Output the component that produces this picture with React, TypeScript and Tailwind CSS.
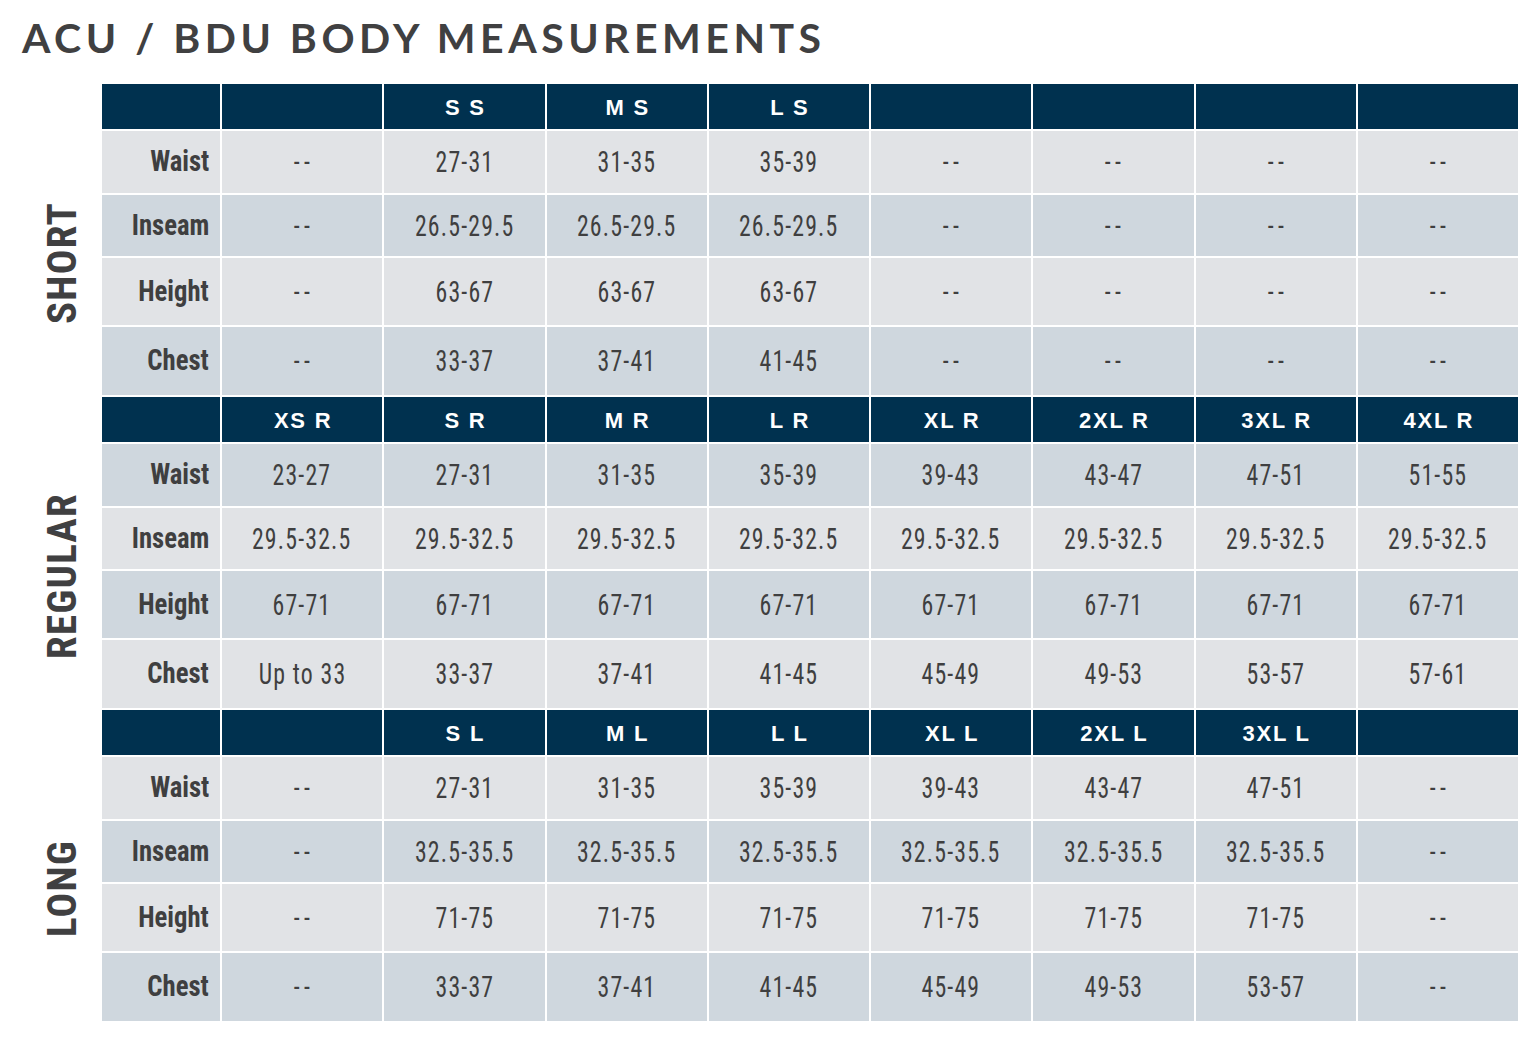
const LABELS = ['Waist', 'Inseam', 'Height', 'Chest']
const ROW_HEIGHTS = ['h-[62px]', 'h-[61px]', 'h-[67px]', 'h-[68px]']

interface Section {
  name: string
  sizes: string[]
  rows: string[][]
  startLight: boolean
}

const dash = '--'

const SECTIONS: Section[] = [
  {
    name: 'SHORT',
    sizes: ['', 'S S', 'M S', 'L S', '', '', '', ''],
    rows: [
      [dash, '27-31', '31-35', '35-39', dash, dash, dash, dash],
      [dash, '26.5-29.5', '26.5-29.5', '26.5-29.5', dash, dash, dash, dash],
      [dash, '63-67', '63-67', '63-67', dash, dash, dash, dash],
      [dash, '33-37', '37-41', '41-45', dash, dash, dash, dash]
    ],
    startLight: true
  },
  {
    name: 'REGULAR',
    sizes: ['XS R', 'S R', 'M R', 'L R', 'XL R', '2XL R', '3XL R', '4XL R'],
    rows: [
      ['23-27', '27-31', '31-35', '35-39', '39-43', '43-47', '47-51', '51-55'],
      Array(8).fill('29.5-32.5'),
      Array(8).fill('67-71'),
      ['Up to 33', '33-37', '37-41', '41-45', '45-49', '49-53', '53-57', '57-61']
    ],
    startLight: false
  },
  {
    name: 'LONG',
    sizes: ['', 'S L', 'M L', 'L L', 'XL L', '2XL L', '3XL L', ''],
    rows: [
      [dash, '27-31', '31-35', '35-39', '39-43', '43-47', '47-51', dash],
      [dash, '32.5-35.5', '32.5-35.5', '32.5-35.5', '32.5-35.5', '32.5-35.5', '32.5-35.5', dash],
      [dash, '71-75', '71-75', '71-75', '71-75', '71-75', '71-75', dash],
      [dash, '33-37', '37-41', '41-45', '45-49', '49-53', '53-57', dash]
    ],
    startLight: true
  }
]

function SizeSection({ section }: { section: Section }) {
  return (
    <div className="flex flex-col gap-[2px]">
      <div className="ml-[102px] grid h-[45px] w-[1416px] grid-cols-[118px_repeat(8,1fr)] gap-[2px]">
        <div className="bg-[#00314f]" />
        {section.sizes.map((size, i) => (
          <div
            key={i}
            className="flex items-center justify-center bg-[#00314f] pl-[2px] pt-[1px] font-['Liberation_Sans',Arial,sans-serif] text-[22px] font-bold tracking-[0.08em] text-white"
          >
            {size}
          </div>
        ))}
      </div>
      <div className="flex">
        <div className="flex w-[102px] items-center justify-center pl-[23px]">
          <span className="rotate-180 font-['Roboto_Condensed',sans-serif] text-[41px] font-bold leading-none tracking-[0.03em] text-[#404041] [writing-mode:vertical-rl]">
            {section.name}
          </span>
        </div>
        <div className="flex w-[1416px] flex-col gap-[2px]">
          {section.rows.map((row, r) => {
            const light = (r % 2 === 0) === section.startLight
            const bg = light ? 'bg-[#e1e3e6]' : 'bg-[#cfd7de]'
            return (
              <div key={r} className={`grid grid-cols-[118px_repeat(8,1fr)] gap-[2px] ${ROW_HEIGHTS[r]}`}>
                <div className={`flex items-center justify-end pr-[11px] ${bg}`}>
                  <span className="inline-block origin-right scale-x-[0.92] font-['Roboto_Condensed',sans-serif] text-[29px] font-bold text-[#3f3f40]">
                    {LABELS[r]}
                  </span>
                </div>
                {row.map((value, c) => (
                  <div key={c} className={`flex items-center justify-center pt-[2px] ${bg}`}>
                    <span
                      className={`inline-block scale-x-[0.82] whitespace-nowrap font-['Roboto_Condensed',sans-serif] text-[29px] font-normal text-[#3f3f40] ${
                        value === dash ? 'pl-[5px] tracking-[0.18em]' : 'tracking-[0.05em]'
                      }`}
                    >
                      {value}
                    </span>
                  </div>
                ))}
              </div>
            )
          })}
        </div>
      </div>
    </div>
  )
}

export default function App() {
  return (
    <div className="h-[1056px] w-[1540px] bg-white">
      <h1 className="pl-[22px] pt-[16px] font-['Lato',sans-serif] text-[41px] font-bold leading-[44px] tracking-[0.11em] text-[#404041]">
        ACU / BDU BODY MEASUREMENTS
      </h1>
      <div className="mt-[24px] flex flex-col gap-[2px]">
        {SECTIONS.map(section => (
          <SizeSection key={section.name} section={section} />
        ))}
      </div>
    </div>
  )
}
